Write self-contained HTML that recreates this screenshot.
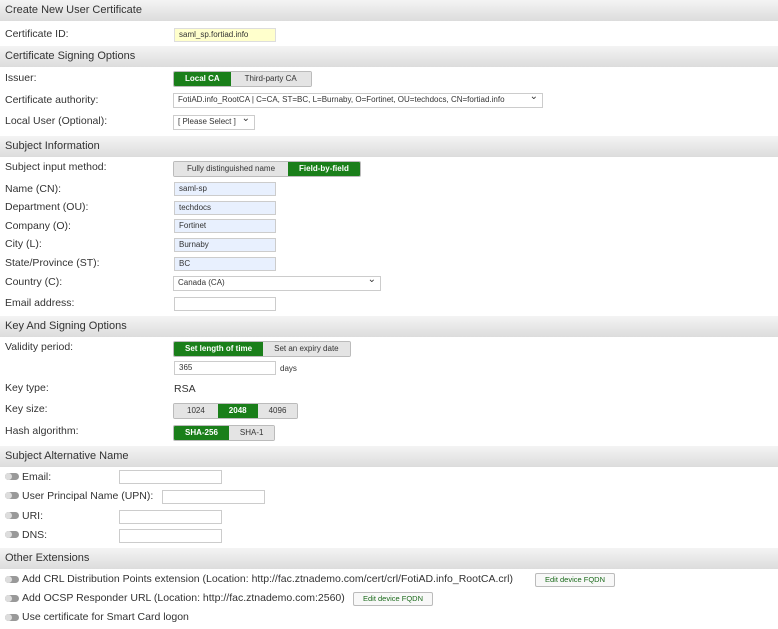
<!DOCTYPE html><html><head><style>
body{margin:0;width:778px;height:629px;background:#fff;font-family:"Liberation Sans",sans-serif;position:relative;overflow:hidden;color:#333}
.h{position:absolute;left:0;width:778px;height:21px;background:linear-gradient(#f4f4f4,#dcdcdc);font-size:11px;line-height:21px;padding-left:5px;box-sizing:border-box;color:#333}
.l{position:absolute;left:5px;font-size:10.5px;line-height:14px}
.i{position:absolute;height:14px;border:1px solid #ccc;box-sizing:border-box;font-size:8px;line-height:12px;padding-left:4px;background:#fff}
.b{background:#e8f0fe}
.g{position:absolute;display:flex;height:16px;border:1px solid #bbb;border-radius:2px;box-sizing:border-box;font-size:8px;line-height:14px;overflow:hidden}
.g span{padding:0 11px;background:#e4e4e4;color:#333}
.g span.on{background:#1a7f1a;color:#fff;font-weight:bold}
.t{position:absolute;left:5px;width:14px;height:7px;border-radius:4px;background:#999}
.t:after{content:"";position:absolute;left:0;top:0;width:7px;height:7px;border-radius:50%;background:#ddd}
.bt{position:absolute;height:14px;border:1px solid #bbb;border-radius:2px;font-size:7.5px;line-height:12px;padding:0 9px;color:#1a6a1a;background:#f8f8f8;box-sizing:border-box}
.sel:after{content:"⌄";position:absolute;right:4px;top:-3px;font-size:10px}
</style></head><body>
<div class="h" style="top:0">Create New User Certificate</div>
<div class="l" style="top:27px">Certificate ID:</div>
<div class="i" style="left:174px;top:28px;width:102px;background:#ffffcc;border-color:#ddd">saml_sp.fortiad.info</div>
<div class="h" style="top:46px">Certificate Signing Options</div>
<div class="l" style="top:71px">Issuer:</div>
<div class="g" style="left:173px;top:71px"><span class="on">Local CA</span><span style="padding:0 14px">Third-party CA</span></div>
<div class="l" style="top:93px">Certificate authority:</div>
<div class="i sel" style="left:173px;top:93px;width:370px;height:15px">FotiAD.info_RootCA | C=CA, ST=BC, L=Burnaby, O=Fortinet, OU=techdocs, CN=fortiad.info</div>
<div class="l" style="top:114px">Local User (Optional):</div>
<div class="i sel" style="left:173px;top:115px;width:82px;height:15px">[ Please Select ]</div>
<div class="h" style="top:136px">Subject Information</div>
<div class="l" style="top:160px">Subject input method:</div>
<div class="g" style="left:173px;top:161px"><span style="padding:0 13px">Fully distinguished name</span><span class="on">Field-by-field</span></div>
<div class="l" style="top:182px">Name (CN):</div><div class="i b" style="left:174px;top:182px;width:102px">saml-sp</div>
<div class="l" style="top:200px">Department (OU):</div><div class="i b" style="left:174px;top:201px;width:102px">techdocs</div>
<div class="l" style="top:219px">Company (O):</div><div class="i b" style="left:174px;top:219px;width:102px">Fortinet</div>
<div class="l" style="top:237px">City (L):</div><div class="i b" style="left:174px;top:238px;width:102px">Burnaby</div>
<div class="l" style="top:256px">State/Province (ST):</div><div class="i b" style="left:174px;top:257px;width:102px">BC</div>
<div class="l" style="top:275px">Country (C):</div><div class="i sel" style="left:173px;top:276px;width:208px;height:15px">Canada (CA)</div>
<div class="l" style="top:296px">Email address:</div><div class="i" style="left:174px;top:297px;width:102px"></div>
<div class="h" style="top:316px">Key And Signing Options</div>
<div class="l" style="top:340px">Validity period:</div>
<div class="g" style="left:173px;top:341px"><span class="on">Set length of time</span><span>Set an expiry date</span></div>
<div class="i" style="left:174px;top:361px;width:102px">365</div>
<div class="l" style="left:280px;top:362px;font-size:8px">days</div>
<div class="l" style="top:381px">Key type:</div><div class="l" style="left:174px;top:382px">RSA</div>
<div class="l" style="top:402px">Key size:</div>
<div class="g" style="left:173px;top:403px"><span style="padding:0 13px">1024</span><span class="on">2048</span><span>4096</span></div>
<div class="l" style="top:424px">Hash algorithm:</div>
<div class="g" style="left:173px;top:425px"><span class="on">SHA-256</span><span>SHA-1</span></div>
<div class="h" style="top:446px">Subject Alternative Name</div>
<div class="t" style="top:473px"></div><div class="l" style="left:22px;top:470px">Email:</div><div class="i" style="left:119px;top:470px;width:103px"></div>
<div class="t" style="top:492px"></div><div class="l" style="left:22px;top:489px">User Principal Name (UPN):</div><div class="i" style="left:162px;top:490px;width:103px"></div>
<div class="t" style="top:512px"></div><div class="l" style="left:22px;top:509px">URI:</div><div class="i" style="left:119px;top:510px;width:103px"></div>
<div class="t" style="top:531px"></div><div class="l" style="left:22px;top:528px">DNS:</div><div class="i" style="left:119px;top:529px;width:103px"></div>
<div class="h" style="top:548px">Other Extensions</div>
<div class="t" style="top:576px"></div><div class="l" style="left:22px;top:572px">Add CRL Distribution Points extension (Location: http://fac.ztnademo.com/cert/crl/FotiAD.info_RootCA.crl)</div>
<div class="bt" style="left:535px;top:573px">Edit device FQDN</div>
<div class="t" style="top:595px"></div><div class="l" style="left:22px;top:591px">Add OCSP Responder URL (Location: http://fac.ztnademo.com:2560)</div>
<div class="bt" style="left:353px;top:592px">Edit device FQDN</div>
<div class="t" style="top:614px"></div><div class="l" style="left:22px;top:610px">Use certificate for Smart Card logon</div>
</body></html>
